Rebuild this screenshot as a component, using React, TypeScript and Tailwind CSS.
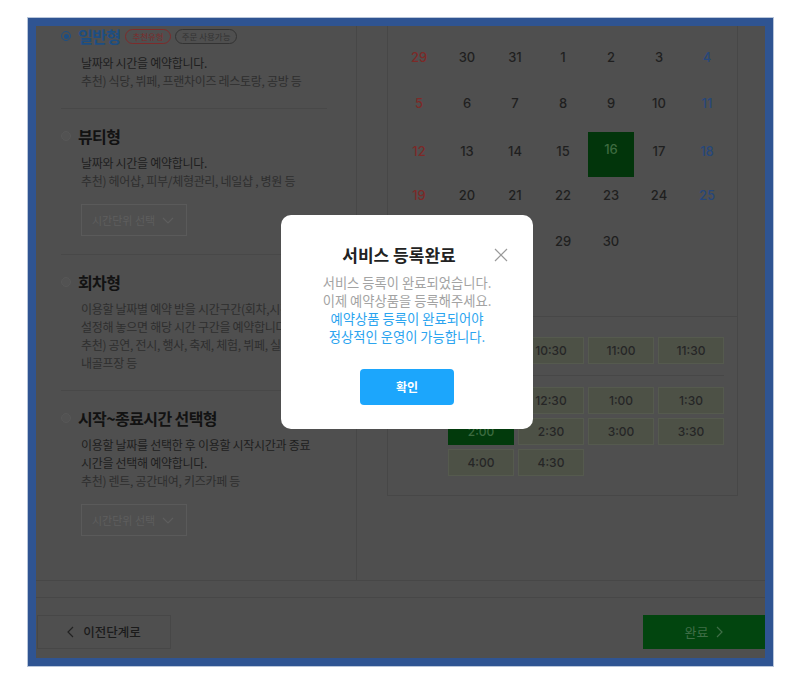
import React from "react";

const KR = "font-['Noto_Sans_CJK_KR',sans-serif]";
const NUM = "font-['Inter','Noto_Sans_CJK_KR',sans-serif]";

type Item = {
  title: string;
  selected?: boolean;
  badges?: boolean;
  lines: { text: string; muted?: boolean }[];
  select?: boolean;
};

const items: Item[] = [
  {
    title: "일반형",
    selected: true,
    badges: true,
    lines: [
      { text: "날짜와 시간을 예약합니다." },
      { text: "추천) 식당, 뷔페, 프랜차이즈 레스토랑, 공방 등", muted: true },
    ],
  },
  {
    title: "뷰티형",
    lines: [
      { text: "날짜와 시간을 예약합니다." },
      { text: "추천) 헤어샵, 피부/체형관리, 네일샵 , 병원 등", muted: true },
    ],
    select: true,
  },
  {
    title: "회차형",
    lines: [
      { text: "이용할 날짜별 예약 받을 시간구간(회차,시간대)를", muted: true },
      { text: "설정해 놓으면 해당 시간 구간을 예약합니다.", muted: true },
      { text: "추천) 공연, 전시, 행사, 축제, 체험, 뷔페, 실", muted: true },
      { text: "내골프장 등", muted: true },
    ],
  },
  {
    title: "시작~종료시간 선택형",
    lines: [
      { text: "이용할 날짜를 선택한 후 이용할 시작시간과 종료" },
      { text: "시간을 선택해 예약합니다." },
      { text: "추천) 렌트, 공간대여, 키즈카페 등", muted: true },
    ],
    select: true,
  },
];

const weeks = [
  ["29", "30", "31", "1", "2", "3", "4"],
  ["5", "6", "7", "8", "9", "10", "11"],
  ["12", "13", "14", "15", "16", "17", "18"],
  ["19", "20", "21", "22", "23", "24", "25"],
  ["26", "27", "28", "29", "30", "", ""],
];

function Radio({ on }: { on?: boolean }) {
  return on ? (
    <span className="w-[10px] h-[10px] rounded-full border-[1.5px] border-[#1d4e82] flex items-center justify-center shrink-0">
      <span className="w-[5px] h-[5px] rounded-full bg-[#1d4e82]" />
    </span>
  ) : (
    <span className="w-[10px] h-[10px] rounded-full border border-[#575757] bg-[#525252] shrink-0" />
  );
}

function SelectBox() {
  return (
    <div className="mt-[14px] w-[106px] h-[32px] border border-[#5a5a5a] flex items-center pl-[10px] gap-[7px] text-[11px] text-[#5e5e5e]">
      <span>시간단위 선택</span>
      <svg width="12" height="7" viewBox="0 0 12 7" fill="none">
        <path d="M1 1l5 5 5-5" stroke="#5e5e5e" strokeWidth="1.2" />
      </svg>
    </div>
  );
}

function TypeItem({ item, first }: { item: Item; first?: boolean }) {
  return (
    <div className={`${first ? "" : "pt-[17px] border-t border-[#484848]"} pb-[18px]`}>
      <div className="h-[20px] flex items-center">
        <Radio on={item.selected} />
        <span
          className={`ml-[7px] text-[16px] font-bold tracking-[-0.6px] ${
            item.selected ? "text-[#1d4e82]" : "text-[#121212]"
          }`}
        >
          {item.title}
        </span>
        {item.badges && (
          <div className="flex items-center gap-[4px] ml-[5px]">
            <span className="h-[15px] px-[6px] rounded-full border border-[#7d2b2b] text-[#7d2b2b] text-[8.5px] leading-[13px] flex items-center">
              추천유형
            </span>
            <span className="h-[15px] px-[6px] rounded-full border border-[#333] text-[#333] text-[8.5px] leading-[13px] flex items-center">
              주문 사용가능
            </span>
          </div>
        )}
      </div>
      <div className="pl-[20px] mt-[8px]">
        {item.lines.map((l, i) => (
          <div
            key={i}
            className={`h-[18px] leading-[18px] text-[12px] tracking-[-0.3px] whitespace-nowrap ${
              l.muted ? "text-[#2e2e2e]" : "text-[#1e1e1e]"
            }`}
          >
            {l.text}
          </div>
        ))}
        {item.select && <SelectBox />}
      </div>
    </div>
  );
}

function Slot({ t, on }: { t: string; on?: boolean }) {
  return (
    <div
      className={`h-[27px] flex items-center justify-center text-[12px] font-medium ${
        on
          ? "bg-[#023a0c] text-[#3c6b40]"
          : "bg-[#4d5146] border border-[#555a4e] text-[#262626]"
      }`}
    >
      {t}
    </div>
  );
}

export default function App() {
  return (
    <div className={`min-h-screen bg-white ${KR}`}>
      <div className="ml-[27px] pt-[17px]">
        <div className="w-[747px] h-[650px] border border-[#b9c6da]">
          <div className="h-full border-[8px] border-[#2f5492]">
            <div className="relative h-full bg-[#4f4f4f] overflow-hidden flex flex-col">
              {/* main */}
              <div className="h-[555px] flex border-b border-[#474747] shrink-0">
                <div className="w-[321px] border-r border-[#474747] pl-[25px] pr-[29px]">
                  {items.map((it, i) => (
                    <TypeItem key={i} item={it} first={i === 0} />
                  ))}
                </div>
                <div className="flex-1 pl-[30px] pr-[27px]">
                  <div className="border-l border-r border-b border-[#474747]">
                    <div className={`pl-[7px] pt-[9px] ${NUM}`}>
                      {weeks.map((w, r) => (
                        <div key={r} className="grid grid-cols-[repeat(7,48px)] h-[46px]">
                          {w.map((d, c) => {
                            const sel = r === 2 && c === 4;
                            const color =
                              c === 0 ? "text-[#7c2a28]" : c === 6 ? "text-[#27477a]" : "text-[#1f1f1f]";
                            return (
                              <div key={c} className="flex items-center justify-center">
                                {sel ? (
                                  <div className="self-start mt-[5px] w-[46px] h-[45px] bg-[#02350b] flex items-center justify-center text-[13px] font-medium text-[#3e6b40] pb-[9px]">
                                    {d}
                                  </div>
                                ) : (
                                  <span className={`text-[13px] font-medium ${color}`}>{d}</span>
                                )}
                              </div>
                            );
                          })}
                        </div>
                      ))}
                    </div>
                    <div className={`mt-[51px] border-t border-[#474747] pt-[20px] pb-[19px] pl-[60px] ${NUM}`}>
                      <div className="w-[276px]">
                        <div className="grid grid-cols-4 gap-[4px]">
                          {["10:00", "10:30", "11:00", "11:30"].map((t) => (
                            <Slot key={t} t={t} />
                          ))}
                        </div>
                        <div className="my-[11px] border-t border-[#474747]" />
                        <div className="grid grid-cols-4 gap-[4px]">
                          {["12:00", "12:30", "1:00", "1:30", "2:00", "2:30", "3:00", "3:30", "4:00", "4:30"].map(
                            (t) => (
                              <Slot key={t} t={t} on={t === "2:00"} />
                            )
                          )}
                        </div>
                      </div>
                    </div>
                  </div>
                </div>
              </div>
              {/* strip */}
              <div className="h-[17px] border-b border-[#474747] shrink-0" />
              {/* footer */}
              <div className="flex justify-between items-start pt-[17px] pl-px">
                <button className="w-[134px] h-[34px] border border-[#474747] flex items-center justify-center gap-[9px] text-[12.5px] font-medium text-[#1b1b1b]">
                  <svg width="7" height="12" viewBox="0 0 7 12" fill="none">
                    <path d="M6 1L1 6l5 5" stroke="#222" strokeWidth="1.2" />
                  </svg>
                  <span>이전단계로</span>
                </button>
                <button className="w-[122px] h-[34px] bg-[#02450f] flex items-center justify-center gap-[8px] text-[13px] text-[#3f6e47]">
                  <span>완료</span>
                  <svg width="7" height="12" viewBox="0 0 7 12" fill="none">
                    <path d="M1 1l5 5-5 5" stroke="#3f6e47" strokeWidth="1.2" />
                  </svg>
                </button>
              </div>

              {/* modal */}
              <div className="absolute left-[245px] top-[189px] w-[252px] bg-white rounded-[10px] pt-[29px] pb-[24px] flex flex-col items-center">
                <div className="relative w-full">
                  <div className="text-center pr-[16px] text-[17px] leading-[22px] font-bold text-[#222]">
                    서비스 등록완료
                  </div>
                  <button className="absolute right-[25px] top-[4px]">
                    <svg width="14" height="14" viewBox="0 0 14 14" fill="none">
                      <path d="M1 1l12 12M13 1L1 13" stroke="#9a9a9a" strokeWidth="1.2" />
                    </svg>
                  </button>
                </div>
                <div className="mt-[8px] text-center text-[13.3px] leading-[18px]">
                  <div className="text-[#a3a3a3]">서비스 등록이 완료되었습니다.</div>
                  <div className="text-[#a3a3a3]">이제 예약상품을 등록해주세요.</div>
                  <div className="text-[#2ba4ef]">예약상품 등록이 완료되어야</div>
                  <div className="text-[#2ba4ef]">정상적인 운영이 가능합니다.</div>
                </div>
                <button className="mt-[23px] w-[94px] h-[36px] rounded-[4px] bg-[#1ca6fc] text-white text-[12px] font-semibold">
                  확인
                </button>
              </div>
            </div>
          </div>
        </div>
      </div>
    </div>
  );
}
